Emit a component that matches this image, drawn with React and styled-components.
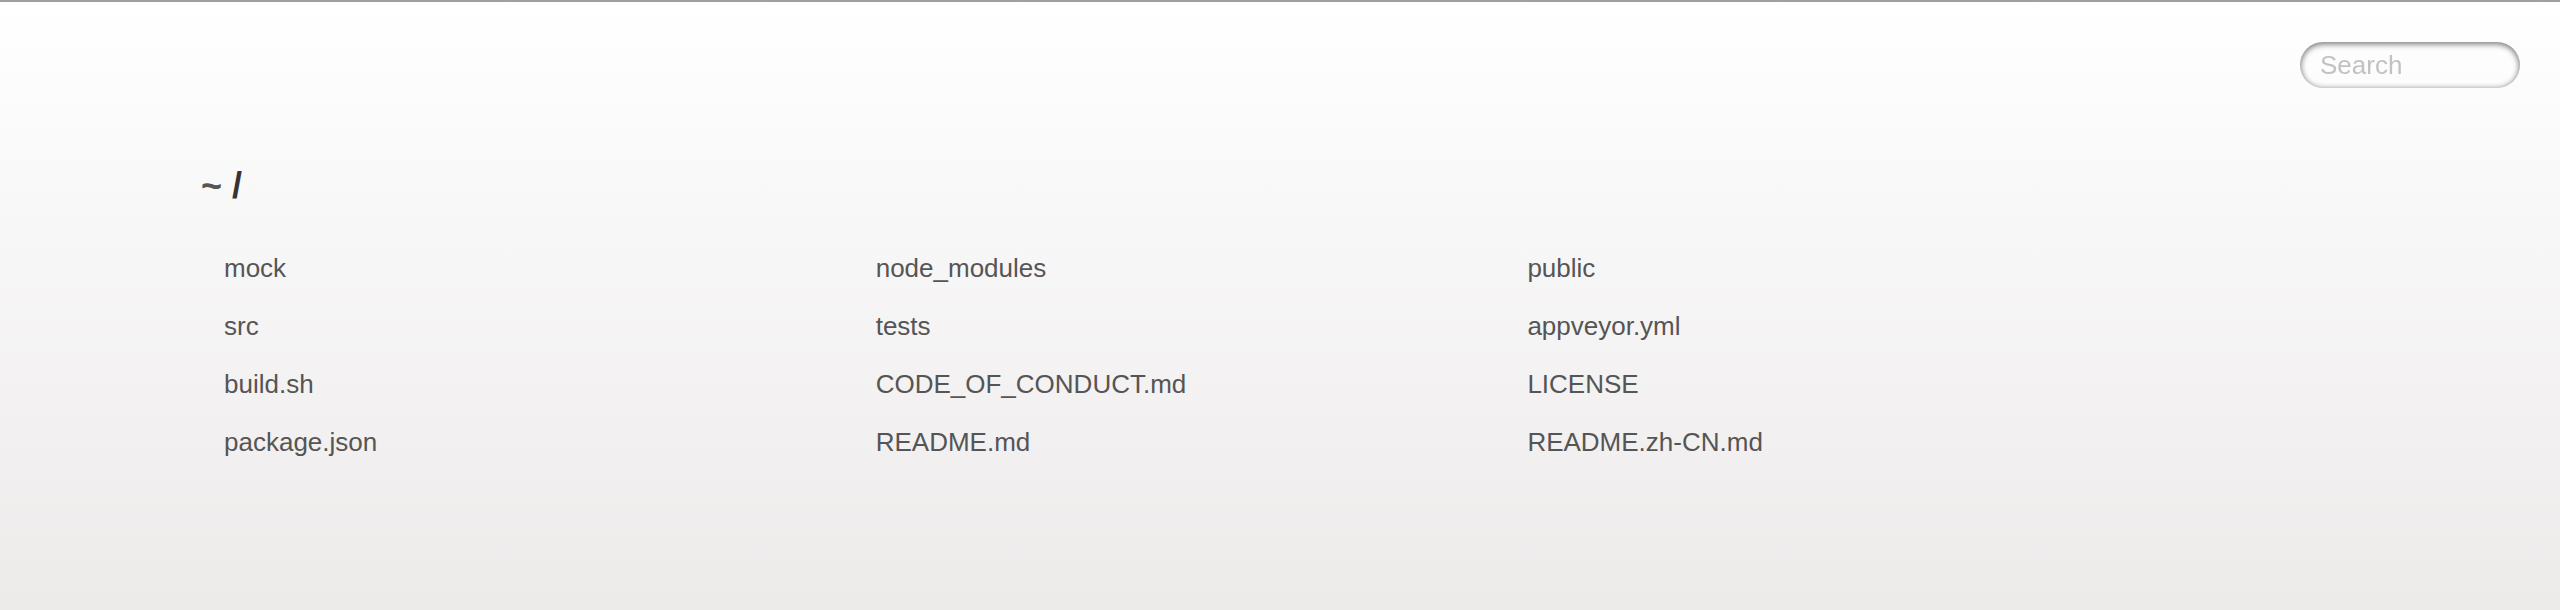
import React from 'react';
import styled, { createGlobalStyle } from 'styled-components';

const GlobalStyle = createGlobalStyle`
  * { margin: 0; padding: 0; outline: 0; box-sizing: content-box; }
  html, body { background: #ece9e9; }
  body {
    font: 26px "Liberation Sans", Arial, sans-serif;
    color: #555;
    -webkit-font-smoothing: antialiased;
  }
`;

const Page = styled.div`
  height: 450px;
  overflow: hidden;
  border-top: 2px solid #a0a0a0;
  padding: 158px 200px 0 201px;
  background: #ece9e9 linear-gradient(to bottom, #fff, #ece9e9 104%) no-repeat;
`;

const Search = styled.input`
  display: block;
  position: fixed;
  top: 42px;
  right: 40px;
  width: 180px;
  padding: 8px 20px;
  border: none;
  border-radius: 64px;
  box-shadow: inset 0 0 6px rgba(0, 0, 0, 0.25), inset 0 2px 6px rgba(0, 0, 0, 0.7),
    0 2px 0 rgba(255, 255, 255, 0.03);
  background: transparent;
  font: 26px "Liberation Sans", Arial, sans-serif;
  line-height: 30px;
  color: #888;
  opacity: 0.7;
  &::placeholder { color: #a9a9a9; }
`;

const Title = styled.h1`
  font-size: 36px;
  line-height: 52px;
  font-weight: bold;
  color: #343434;
  margin-bottom: 27px;
  a { color: #555; text-decoration: none; }
`;

const Files = styled.ul`
  display: flex;
  flex-wrap: wrap;
  width: 100%;
`;

const File = styled.li`
  list-style: none;
  width: 30%;
  margin: 2px;
  line-height: 50px;
`;

const FileLink = styled.a`
  display: block;
  height: 50px;
  padding-left: 19px;
  border: 2px solid transparent;
  border-radius: 10px;
  color: #555;
  text-decoration: none;
  white-space: nowrap;
  overflow: hidden;
  &:hover {
    background: rgba(255, 255, 255, 0.65);
    border-color: #ececec;
  }
`;

const files = [
  'mock', 'node_modules', 'public',
  'src', 'tests', 'appveyor.yml',
  'build.sh', 'CODE_OF_CONDUCT.md', 'LICENSE',
  'package.json', 'README.md', 'README.zh-CN.md',
];

export default function App() {
  return (
    <>
      <GlobalStyle />
      <Page>
        <Search placeholder="Search" />
        <Title><a href="/">~</a> / </Title>
        <Files>
          {files.map((f) => (
            <File key={f}>
              <FileLink href={`/${f}`}>{f}</FileLink>
            </File>
          ))}
        </Files>
      </Page>
    </>
  );
}
